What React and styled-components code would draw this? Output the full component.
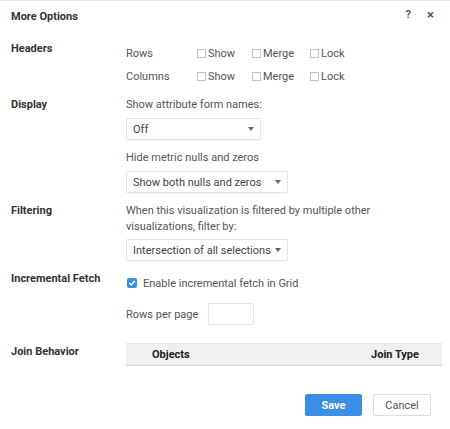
import React from "react"
import styled, { createGlobalStyle } from "styled-components"

const GlobalStyle = createGlobalStyle`
  html, body {
    margin: 0;
    padding: 0;
    background: #fff;
  }
  body {
    font-family: Roboto, "Liberation Sans", Arial, sans-serif;
    font-size: 11px;
    color: #555;
  }
`

const Dialog = styled.div`
  width: 450px;
  height: 429px;
  box-sizing: border-box;
  border-top: 1px solid #e4e8ed;
  padding: 0 8px 0 11px;
`

const TitleBar = styled.div`
  display: flex;
  align-items: center;
  justify-content: space-between;
  height: 31px;
  margin-bottom: 10px;
`

const Title = styled.div`
  font-weight: 700;
  color: #333;
  line-height: 14px;
`

const TitleIcons = styled.div`
  display: flex;
  align-items: center;
  gap: 16px;
  margin-right: 8px;
  margin-top: -4px;
  color: #555;
  font-weight: 700;
`

const IconButton = styled.span`
  font-size: ${(p) => p.size || 11}px;
  line-height: 14px;
  cursor: pointer;
`

const Section = styled.div`
  display: grid;
  grid-template-columns: 115px 1fr;
  margin-bottom: ${(p) => p.gap || 0}px;
`

const Label = styled.div`
  font-weight: 700;
  color: #333;
  line-height: 14px;
  padding-top: ${(p) => p.offset || 0}px;
`

const HeaderGrid = styled.div`
  display: grid;
  grid-template-columns: 70px 55px 58px auto;
  grid-auto-rows: 23px;
  align-items: center;
`

const CheckLabel = styled.label`
  display: flex;
  align-items: center;
  line-height: 14px;
`

const Box = styled.span`
  width: 9px;
  height: 9px;
  box-sizing: border-box;
  border: 1px solid #c2c2c2;
  background: #fff;
  margin: 0 2px 0 1px;
`

const CheckedBox = styled.span`
  display: flex;
  align-items: center;
  justify-content: center;
  width: 10px;
  height: 10px;
  border-radius: 2px;
  background: #3b8ee6;
  margin: 0 6px 0 1px;
`

const Text = styled.div`
  line-height: ${(p) => p.lh || 14}px;
  margin-top: ${(p) => p.mt || 0}px;
`

const Select = styled.div`
  display: flex;
  align-items: center;
  justify-content: space-between;
  width: ${(p) => p.width}px;
  height: 22px;
  box-sizing: border-box;
  margin-top: ${(p) => p.mt || 0}px;
  padding: 0 6px 0 6px;
  border: 1px solid #e1e5ea;
  border-radius: 2px;
  box-shadow: 0 1px 1px rgba(0, 0, 0, 0.03);
  color: #444;
  background: #fff;
`

const Caret = styled.span`
  width: 0;
  height: 0;
  border-left: 3.5px solid transparent;
  border-right: 3.5px solid transparent;
  border-top: 4px solid #666;
`

const FetchRow = styled.div`
  display: flex;
  align-items: center;
  height: 22px;
  margin-top: ${(p) => p.mt || 0}px;
`

const NumberInput = styled.div`
  width: 46px;
  height: 22px;
  box-sizing: border-box;
  margin-left: 10px;
  border: 1px solid #e1e5ea;
  border-radius: 2px;
  background: #fff;
`

const Table = styled.div`
  display: flex;
  align-items: center;
  justify-content: space-between;
  height: 23px;
  box-sizing: border-box;
  padding: 0 23px 0 26px;
  background: #f0f0f0;
  border-top: 1px solid #e6e6e6;
  border-bottom: 1px solid #d6d6d6;
  font-weight: 700;
  color: #222;
`

const Footer = styled.div`
  display: flex;
  justify-content: flex-end;
  gap: 11px;
  margin-right: 11px;
`

const Button = styled.button`
  height: 22px;
  width: ${(p) => p.width}px;
  box-sizing: border-box;
  font-family: inherit;
  font-size: 11px;
  border-radius: 2px;
  cursor: pointer;
  border: 1px solid ${(p) => (p.primary ? "#3b8ee6" : "#dcdcdc")};
  background: ${(p) => (p.primary ? "#3b8ee6" : "#fff")};
  color: ${(p) => (p.primary ? "#fff" : "#555")};
  font-weight: ${(p) => (p.primary ? 700 : 400)};
`

const Check = ({ label }) => (
  <CheckLabel>
    <Box />
    {label}
  </CheckLabel>
)

export default function App() {
  return (
    <>
      <GlobalStyle />
      <Dialog>
        <TitleBar>
          <Title>More Options</Title>
          <TitleIcons>
            <IconButton>?</IconButton>
            <IconButton size={13}>×</IconButton>
          </TitleIcons>
        </TitleBar>

        <Section gap={10}>
          <Label offset={0}>Headers</Label>
          <HeaderGrid>
            <span>Rows</span>
            <Check label="Show" />
            <Check label="Merge" />
            <Check label="Lock" />
            <span>Columns</span>
            <Check label="Show" />
            <Check label="Merge" />
            <Check label="Lock" />
          </HeaderGrid>
        </Section>

        <Section gap={10}>
          <Label>Display</Label>
          <div>
            <Text>Show attribute form names:</Text>
            <Select width={135} mt={6}>
              Off
              <Caret />
            </Select>
            <Text mt={11}>Hide metric nulls and zeros</Text>
            <Select width={162} mt={6}>
              Show both nulls and zeros
              <Caret />
            </Select>
          </div>
        </Section>

        <Section gap={11}>
          <Label offset={1}>Filtering</Label>
          <div>
            <Text lh={16}>
              When this visualization is filtered by multiple other
              <br />
              visualizations, filter by:
            </Text>
            <Select width={162} mt={4}>
              Intersection of all selections
              <Caret />
            </Select>
          </div>
        </Section>

        <Section gap={18}>
          <Label>Incremental Fetch</Label>
          <div>
            <FetchRow>
              <CheckedBox>
                <svg width="8" height="8" viewBox="0 0 8 8">
                  <path d="M1.3 4.1 L3.2 6 L6.8 2" fill="none" stroke="#fff" strokeWidth="1.4" />
                </svg>
              </CheckedBox>
              Enable incremental fetch in Grid
            </FetchRow>
            <FetchRow mt={9}>
              Rows per page
              <NumberInput />
            </FetchRow>
          </div>
        </Section>

        <Section gap={28}>
          <Label offset={2}>Join Behavior</Label>
          <Table>
            <span>Objects</span>
            <span>Join Type</span>
          </Table>
        </Section>

        <Footer>
          <Button primary width={57}>Save</Button>
          <Button width={58}>Cancel</Button>
        </Footer>
      </Dialog>
    </>
  )
}
